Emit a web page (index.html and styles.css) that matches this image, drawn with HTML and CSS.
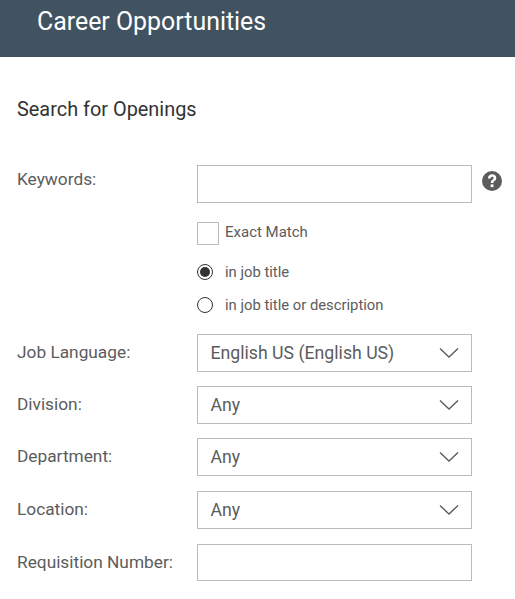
FILE: index.html
```html
<!DOCTYPE html>
<html lang="en">
<head>
    <meta charset="UTF-8">
    <meta name="viewport" content="width=device-width, initial-scale=1.0">
    <title>Career Opportunities</title>
    <link rel="stylesheet" href="styles.css">
</head>
<body>
    <div class="page-header">
        <div class="page-title">Career Opportunities</div>
    </div>

    <div class="search-section">
        <div class="search-title">Search for Openings</div>

        <!-- Keywords -->
        <div class="form-row keywords-row">
            <div class="form-label">Keywords:</div>
            <div class="text-input"></div>
            <svg class="help-icon" width="20" height="20" viewBox="0 0 20 20">
                <circle cx="10" cy="10" r="10" fill="#5c5c5c"/>
                <path d="M5.9 7.5C5.9 4.9 7.7 3.3 10.2 3.3C12.6 3.3 14.3 4.8 14.3 6.9C14.3 8.5 13.4 9.3 12.4 10.1C11.6 10.7 11.4 11.1 11.4 12.1H8.8C8.8 10.5 9.2 9.7 10.3 8.8C11.1 8.2 11.6 7.8 11.6 7C11.6 6.2 11 5.7 10.2 5.7C9.2 5.7 8.6 6.4 8.5 7.6Z" fill="#fff"/>
                <rect x="8.7" y="13.4" width="2.8" height="2.7" fill="#fff"/>
            </svg>
        </div>

        <div class="match-options">
            <div class="check-option">
                <span class="square-check"></span><span class="option-text">Exact Match</span>
            </div>
            <div class="radio-option active">
                <span class="round-radio"></span>in job title
            </div>
            <div class="radio-option">
                <span class="round-radio"></span>in job title or description
            </div>
        </div>

        <!-- Dropdowns -->
        <div class="form-row select-row">
            <div class="form-label">Job Language:</div>
            <div class="select-input">
                <span>English US (English US)</span>
                <svg class="chevron" width="20" height="12" viewBox="0 0 20 12"><path d="M1 1.5L10 10L19 1.5" fill="none" stroke="#5c5c5c" stroke-width="1.4"/></svg>
            </div>
        </div>
        <div class="form-row select-row">
            <div class="form-label">Division:</div>
            <div class="select-input">
                <span>Any</span>
                <svg class="chevron" width="20" height="12" viewBox="0 0 20 12"><path d="M1 1.5L10 10L19 1.5" fill="none" stroke="#5c5c5c" stroke-width="1.4"/></svg>
            </div>
        </div>
        <div class="form-row select-row">
            <div class="form-label">Department:</div>
            <div class="select-input">
                <span>Any</span>
                <svg class="chevron" width="20" height="12" viewBox="0 0 20 12"><path d="M1 1.5L10 10L19 1.5" fill="none" stroke="#5c5c5c" stroke-width="1.4"/></svg>
            </div>
        </div>
        <div class="form-row select-row">
            <div class="form-label">Location:</div>
            <div class="select-input">
                <span>Any</span>
                <svg class="chevron" width="20" height="12" viewBox="0 0 20 12"><path d="M1 1.5L10 10L19 1.5" fill="none" stroke="#5c5c5c" stroke-width="1.4"/></svg>
            </div>
        </div>
        <div class="form-row select-row last-row">
            <div class="form-label">Requisition Number:</div>
            <div class="text-input short"></div>
        </div>
    </div>
</body>
</html>
```

FILE: styles.css
```css
* {
    margin: 0;
    padding: 0;
    box-sizing: border-box;
    font-family: Roboto, Arial, sans-serif;
}

body {
    overflow: hidden;
    background-color: #fff;
}

.page-header {
    height: 57px;
    padding: 6px 0 0 37px;
    background-color: #415261;
}

.page-title {
    font-size: 24.9px;
    line-height: 32px;
    color: #fff;
}

.search-section {
    padding: 40px 0 0 17px;
}

.search-title {
    font-size: 19.9px;
    line-height: 26px;
    color: #333;
    margin-bottom: 42px;
}

.form-row {
    display: flex;
    align-items: flex-start;
}

.select-row {
    margin-bottom: 14.2px;
}

.last-row {
    margin-top: 15px;
}

.form-label {
    width: 180px;
    font-size: 17.3px;
    line-height: 24px;
    padding-top: 2px;
    color: #5c5c5c;
}

.select-row .form-label {
    padding-top: 6px;
}

.text-input {
    width: 275px;
    height: 38px;
    border: 1px solid #bbb;
    background-color: #fff;
}

.text-input.short {
    height: 37px;
}

.help-icon {
    margin: 6px 0 0 10px;
}

.match-options {
    padding: 19px 0 13px 180px;
}

.check-option,
.radio-option {
    display: flex;
    align-items: center;
    font-size: 14.8px;
    color: #5c5c5c;
}

.check-option {
    height: 23px;
    margin-bottom: 10px;
    font-size: 15px;
}

.option-text {
    margin-bottom: 4px;
}

.radio-option {
    height: 33px;
}

.square-check {
    width: 22px;
    height: 23px;
    margin-right: 6px;
    border: 1px solid #bbb;
}

.round-radio {
    width: 16px;
    height: 16px;
    margin-right: 12px;
    border: 1px solid #333;
    border-radius: 50%;
    position: relative;
}

.radio-option.active .round-radio::after {
    content: "";
    width: 10px;
    height: 10px;
    background-color: #333;
    border-radius: 50%;
    position: absolute;
    top: 2px;
    left: 2px;
}

.select-input {
    display: flex;
    justify-content: space-between;
    align-items: center;
    width: 275px;
    height: 38px;
    padding: 0 12px 0 12.5px;
    border: 1px solid #bbb;
    font-size: 17.7px;
    color: #5c5c5c;
}
```
